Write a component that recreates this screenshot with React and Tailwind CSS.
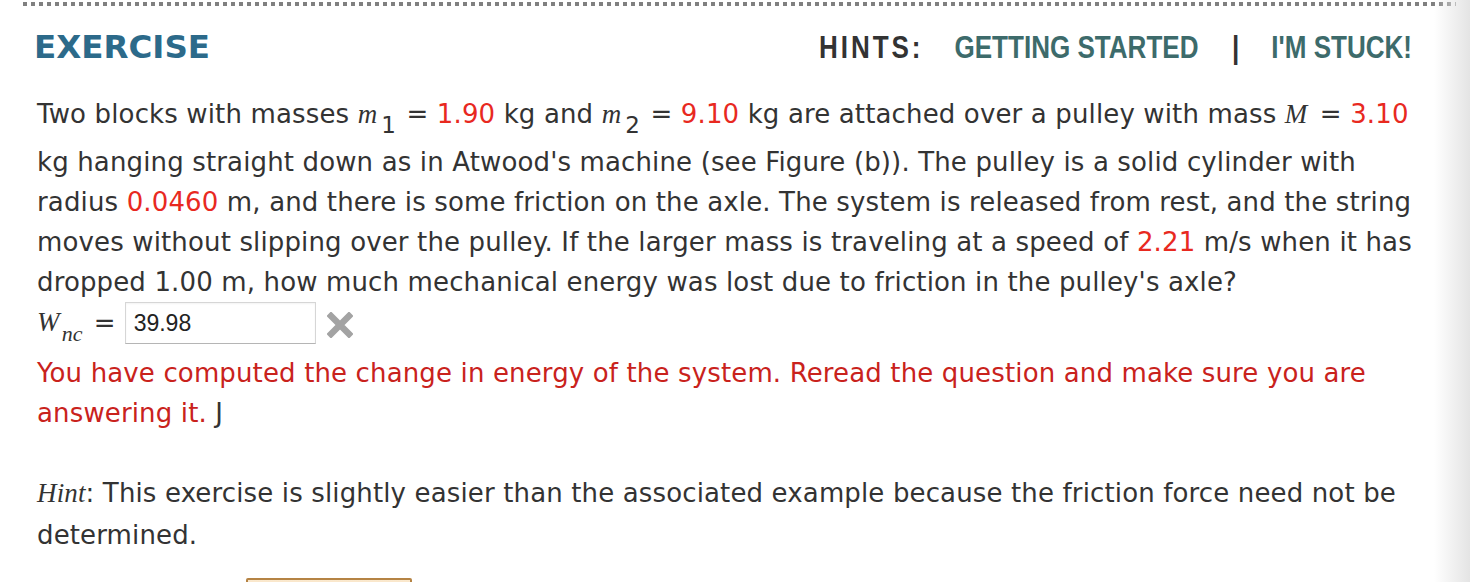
import React from 'react';

const body = { fontFamily: '"DejaVu Sans", Verdana, sans-serif' };
const serif = { fontFamily: '"Liberation Serif", "Times New Roman", serif' };
const head = { fontFamily: '"Liberation Sans", Arial, sans-serif' };

function Num({ children }) {
  return <span className="text-[#e8291f]">{children}</span>;
}

function Var({ children, gap }) {
  return <i style={serif} className={`text-[27px] ${gap ? 'mr-[4px]' : ''}`}>{children}</i>;
}

function Sub({ children }) {
  return <span className="relative top-[10px] ml-[4px] mr-[2px] text-[23px]">{children}</span>;
}

function Line({ children, tall }) {
  return (
    <div className={`${tall ? 'h-[48px]' : 'h-[40px]'} leading-[40px] whitespace-nowrap`}>{children}</div>
  );
}

export default function App() {
  return (
    <div style={body} className="relative h-[582px] overflow-hidden bg-white text-[26px] tracking-[0.14px] text-[#333]">
      {/* dotted rule */}
      <div className="ml-[23px] mr-[14px] mt-[2px] h-[4px] bg-[repeating-linear-gradient(to_right,#808080_0px,#808080_4px,transparent_4px,transparent_8px)]" />

      {/* header */}
      <div className="mt-[24px] flex h-[34px] items-center justify-between pl-[34px] pr-[58px]">
        <h1 className="text-[32.5px] font-bold leading-none tracking-normal text-[#2c6a8a]">EXERCISE</h1>
        <div style={head} className="flex origin-right scale-x-[0.84] items-center text-[31px] font-bold leading-none tracking-normal">
          <span className="tracking-[3.5px] text-[#333]">HINTS:</span>
          <a className="ml-[37px] text-[#3d6b6b]">GETTING STARTED</a>
          <span className="ml-[40px] text-[#333]">|</span>
          <a className="ml-[38px] text-[#3d6b6b]">I'M STUCK!</a>
        </div>
      </div>

      {/* problem statement */}
      <div className="mt-[30px] pl-[37px]">
        <Line tall>
          Two blocks with masses <Var>m</Var><Sub>1</Sub> = <Num>1.90</Num> kg and <Var>m</Var>
          <Sub>2</Sub> = <Num>9.10</Num> kg are attached over a pulley with mass <Var gap>M</Var> ={' '}
          <Num>3.10</Num>
        </Line>
        <Line>kg hanging straight down as in Atwood's machine (see Figure (b)). The pulley is a solid cylinder with</Line>
        <Line>
          radius <Num>0.0460</Num> m, and there is some friction on the axle. The system is released from rest, and the string
        </Line>
        <Line>
          moves without slipping over the pulley. If the larger mass is traveling at a speed of <Num>2.21</Num> m/s when it has
        </Line>
        <Line>dropped 1.00 m, how much mechanical energy was lost due to friction in the pulley's axle?</Line>

        {/* answer row */}
        <div className="flex h-[42px] items-center">
          <span style={serif} className="relative -top-[1px] text-[27px] italic">W</span>
          <span style={serif} className="relative top-[10px] ml-[2px] text-[22px] italic">nc</span>
          <span className="ml-[11px]">=</span>
          <div className="ml-[9px] flex h-[42px] w-[191px] items-center border border-[#d6d6d6] border-b-[#b5b5b5] pl-[8px] shadow-[inset_0_1px_2px_rgba(0,0,0,0.05)]">
            <span style={head} className="text-[23px] tracking-normal text-[#222]">39.98</span>
          </div>
          <svg className="ml-[11px] mt-[4px]" width="26" height="26" viewBox="0 0 26 26">
            <path d="M4 4 L22 22 M22 4 L4 22" stroke="#a3a3a3" strokeWidth="6.5" strokeLinecap="square" />
          </svg>
        </div>

        {/* feedback */}
        <div className="mt-[9px] text-[#c9221c]">
          <Line>You have computed the change in energy of the system. Reread the question and make sure you are</Line>
          <Line>
            answering it. <span className="text-[#333]">J</span>
          </Line>
        </div>

        {/* hint */}
        <div className="mt-[40px]">
          <div className="h-[42px] leading-[40px] whitespace-nowrap">
            <i style={serif} className="text-[27px]">Hint</i>: This exercise is slightly easier than the associated example because the friction force need not be
          </div>
          <Line>determined.</Line>
        </div>

        <div className="ml-[209px] mt-[23px] h-[20px] w-[166px] rounded-t-[2px] border-2 border-[#b58344] bg-[linear-gradient(#fbe9cf,#f3d3a6)]" />
      </div>

      {/* side shadow */}
      <div className="pointer-events-none absolute inset-y-0 right-0 w-[36px] bg-[linear-gradient(to_right,rgba(255,255,255,0),#e4e4e4)]" />
    </div>
  );
}
